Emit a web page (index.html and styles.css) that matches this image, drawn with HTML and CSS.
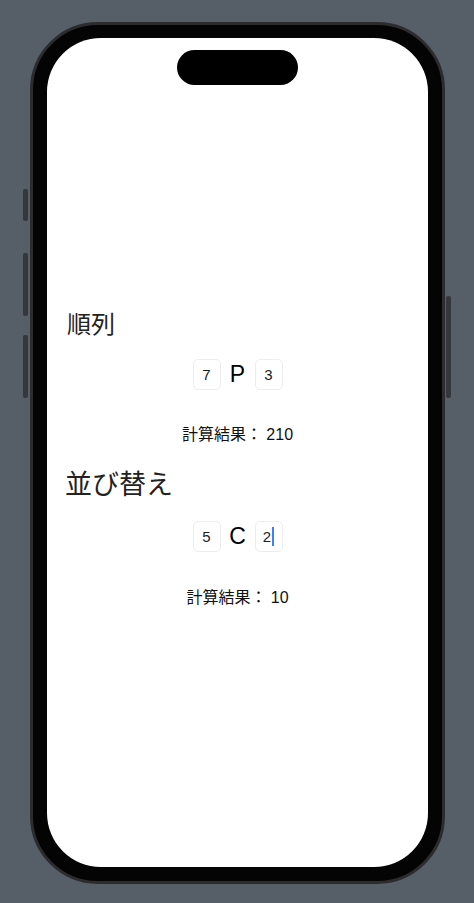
FILE: index.html
```html
<!DOCTYPE html>
<html lang="ja">
<head>
    <meta charset="UTF-8">
    <meta name="viewport" content="width=device-width, initial-scale=1.0">
    <title>順列と組み合わせ</title>
    <link rel="stylesheet" href="styles.css">
</head>
<body>
    <div class="phone">
        <span class="side-btn action"></span>
        <span class="side-btn vol-up"></span>
        <span class="side-btn vol-down"></span>
        <span class="side-btn power"></span>

        <div class="screen">
            <div class="island"></div>

            <main class="content">
                <section class="calc">
                    <h2 class="calc-title">順列</h2>
                    <div class="expr">
                        <span class="field">7</span>
                        <span class="op">P</span>
                        <span class="field">3</span>
                    </div>
                    <p class="result">計算結果： 210</p>
                </section>

                <section class="calc">
                    <h2 class="calc-title calc-title-lg">並び替え</h2>
                    <div class="expr">
                        <span class="field">5</span>
                        <span class="op">C</span>
                        <span class="field">2<i class="caret"></i></span>
                    </div>
                    <p class="result">計算結果： 10</p>
                </section>
            </main>
        </div>
    </div>
</body>
</html>
```

FILE: styles.css
```css
/* simulator backdrop */
body {
    margin: 0;
    background: #565e68;
    font-family: "Liberation Sans", "Noto Sans CJK JP", sans-serif;
    color: #1c1c1e;
}

/* device frame */
.phone {
    position: relative;
    box-sizing: border-box;
    width: 415px;
    height: 862px;
    margin: 22px 0 0 30px;
    padding: 13px 14px 14px;
    border: 3px solid #2c2c2e;
    border-radius: 68px;
    background: #040404;
}

.side-btn {
    position: absolute;
    width: 5px;
    border-radius: 2px;
    background: #34373c;
}

.action   { left: -10px; top: 164px; height: 32px; }
.vol-up   { left: -10px; top: 228px; height: 63px; }
.vol-down { left: -10px; top: 310px; height: 63px; }
.power    { right: -9px; top: 271px; height: 102px; }

.screen {
    height: 100%;
    padding-top: 12px;
    box-sizing: border-box;
    border-radius: 54px;
    background: #fff;
    overflow: hidden;
}

.island {
    width: 121px;
    height: 35px;
    margin: 0 auto;
    border-radius: 18px;
    background: #000;
}

/* calculator content */
.content {
    margin-top: 221px;
    padding: 0 20px;
}

.calc-title {
    margin: 0;
    font-family: "Noto Sans CJK JP", sans-serif;
    font-size: 24px;
    font-weight: 400;
    line-height: 34px;
    color: #222;
}

.calc-title-lg {
    margin: 18px 0 0 -2px;
    font-size: 27px;
    line-height: 36px;
}

.expr {
    display: flex;
    justify-content: center;
    align-items: center;
    gap: 7px;
    margin-top: 19px;
}

.calc:last-child .expr {
    margin-top: 20px;
}

.field {
    position: relative;
    box-sizing: border-box;
    width: 28px;
    height: 31px;
    display: flex;
    align-items: center;
    justify-content: center;
    border: 1px solid #ededed;
    border-radius: 5px;
    font-size: 15px;
}

.op {
    width: 20px;
    text-align: center;
    font-size: 23px;
    color: #000;
}

.caret {
    display: inline-block;
    width: 2px;
    height: 19px;
    margin-left: 1px;
    background: #3b82f6;
}

.result {
    margin: 33px 0 0;
    text-align: center;
    font-size: 16px;
    line-height: 24px;
    color: #111;
}

.calc:last-child .result {
    margin-top: 34px;
}
```
